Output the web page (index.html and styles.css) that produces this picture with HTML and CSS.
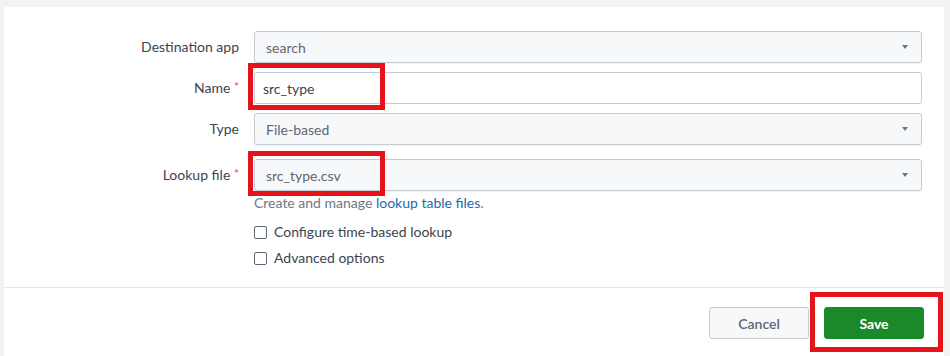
FILE: index.html
```html
<!DOCTYPE html>
<html>
<head>
<meta charset="utf-8">
<link rel="stylesheet" href="styles.css">
</head>
<body>
<div class="panel">
  <div class="form">
    <div class="row">
      <label class="lbl">Destination app</label>
      <div class="select"><span class="val">search</span><span class="caret"></span></div>
    </div>
    <div class="row">
      <label class="lbl">Name <span class="req">*</span></label>
      <div class="ctl">
        <div class="input"><span class="val dark">src_type</span></div>
        <div class="mark mark-name"></div>
      </div>
    </div>
    <div class="row">
      <label class="lbl">Type</label>
      <div class="select"><span class="val">File-based</span><span class="caret"></span></div>
    </div>
    <div class="row row-lookup">
      <label class="lbl">Lookup file <span class="req">*</span></label>
      <div class="ctl">
        <div class="select"><span class="val">src_type.csv</span><span class="caret"></span></div>
        <div class="mark mark-lookup"></div>
        <div class="help">Create and manage <a class="link">lookup table files</a>.</div>
        <div class="checks">
          <div class="check"><span class="box"></span>Configure time-based lookup</div>
          <div class="check"><span class="box"></span>Advanced options</div>
        </div>
      </div>
    </div>
  </div>
  <div class="footer">
    <button class="btn cancel">Cancel</button>
    <div class="save-wrap">
      <button class="btn save">Save</button>
      <div class="mark mark-save"></div>
    </div>
  </div>
</div>
</body>
</html>
```

FILE: styles.css
```css
html, body {
  margin: 0;
  padding: 0;
  background: #f2f3f5;
  font-family: "Lato", "Open Sans", sans-serif;
  font-size: 14px;
  color: #3c444d;
}
.panel {
  margin: 7px 6px 0 4px;
  background: #ffffff;
  height: 349px;
}
.form {
  padding: 24px 22px 19px 0;
}
.row {
  display: grid;
  grid-template-columns: 235px 668px;
  column-gap: 15px;
  margin-bottom: 9px;
}
.row-lookup {
  margin-top: 14px;
  margin-bottom: 0;
}
.lbl {
  text-align: right;
  height: 32px;
  line-height: 32px;
  color: #3c444d;
}
.req {
  color: #dc4e41;
  font-size: 12px;
  vertical-align: top;
  line-height: 30px;
}
.ctl {
  position: relative;
}
.select, .input {
  box-sizing: border-box;
  height: 32px;
  border: 1px solid #c3cbd4;
  border-radius: 3px;
  display: flex;
  align-items: center;
  justify-content: space-between;
  padding: 0 13px 0 11px;
}
.select {
  background: #f7f8fa;
  box-shadow: 0 1px 1px rgba(0,0,0,0.05);
}
.input {
  background: #ffffff;
  padding-left: 8px;
}
.val {
  color: #5c6773;
}
.val.dark {
  color: #3c444d;
}
.caret {
  width: 0;
  height: 0;
  border-left: 3.5px solid transparent;
  border-right: 3.5px solid transparent;
  border-top: 4px solid #6b7785;
}
.help {
  margin-top: 2px;
  line-height: 20px;
  color: #6b7785;
}
.link {
  color: #1a6ba8;
}
.checks {
  margin-top: 9px;
  display: flex;
  flex-direction: column;
  gap: 6px;
}
.check {
  display: flex;
  align-items: center;
  line-height: 20px;
  color: #3c444d;
}
.box {
  box-sizing: border-box;
  width: 13px;
  height: 13px;
  border: 1px solid #5c6773;
  border-radius: 2px;
  margin-right: 7px;
  background: #fff;
}
.footer {
  border-top: 1px solid #e1e6eb;
  display: flex;
  justify-content: flex-end;
  gap: 15px;
  padding: 19px 20px 0 0;
}
.btn {
  box-sizing: border-box;
  width: 100px;
  height: 32px;
  border-radius: 3px;
  font-family: "Lato", "Open Sans", sans-serif;
  font-size: 14px;
  cursor: pointer;
}
.cancel {
  background: #f7f8fa;
  border: 1px solid #c3cbd4;
  color: #5c6773;
  font-weight: 600;
}
.save {
  background: #1a8929;
  border: 1px solid #1a8929;
  color: #ffffff;
  font-weight: 700;
}
.save-wrap {
  position: relative;
}
.mark {
  position: absolute;
  border: 5px solid #e5141b;
  box-sizing: border-box;
  pointer-events: none;
}
.mark-name {
  left: -6px;
  top: -9px;
  width: 137px;
  height: 47px;
}
.mark-lookup {
  left: -6px;
  top: -8px;
  width: 137px;
  height: 45px;
}
.mark-save {
  left: -14px;
  top: -15px;
  width: 133px;
  height: 60px;
}
```
